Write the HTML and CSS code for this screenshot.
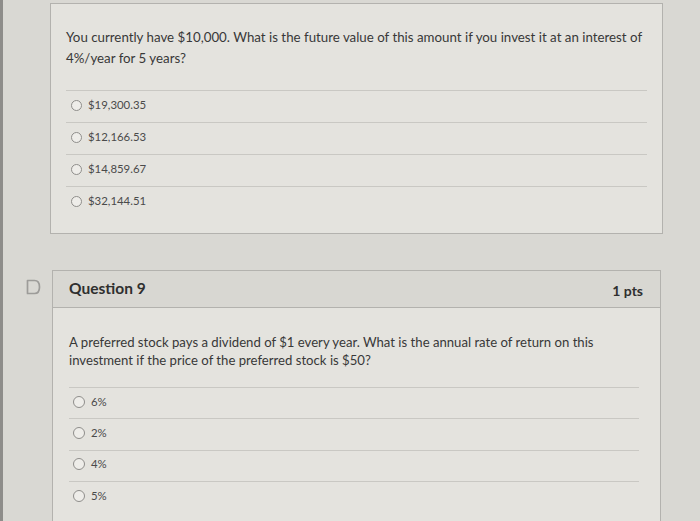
FILE: index.html
```html
<!DOCTYPE html>
<html>
<head>
<meta charset="utf-8">
<link rel="stylesheet" href="styles.css">
</head>
<body>
<div class="page">
  <div class="quiz">
    <section class="card card-first">
      <div class="card-body body-first">
        <p class="q-text q-first">You currently have $10,000. What is the future value of this amount if you invest it at an interest of 4%/year for 5 years?</p>
        <ul class="answers answers-first">
          <li class="answer"><span class="radio"></span><span class="label">$19,300.35</span></li>
          <li class="answer"><span class="radio"></span><span class="label">$12,166.53</span></li>
          <li class="answer"><span class="radio"></span><span class="label">$14,859.67</span></li>
          <li class="answer"><span class="radio"></span><span class="label">$32,144.51</span></li>
        </ul>
      </div>
    </section>

    <section class="card card-second">
      <div class="card-header">
        <svg class="flag" width="18" height="18" viewBox="0 0 18 18" aria-hidden="true">
          <path d="M2.5 2.5 H9.5 Q14.5 2.5 14.5 9 Q14.5 15.5 9.5 15.5 H2.5 Z" fill="none" stroke="#9d9c99" stroke-width="1.7" stroke-linejoin="round"/>
        </svg>
        <h2 class="q-title">Question 9</h2>
        <span class="pts">1 pts</span>
      </div>
      <div class="card-body body-second">
        <p class="q-text q-second">A preferred stock pays a dividend of $1 every year. What is the annual rate of return on this investment if the price of the preferred stock is $50?</p>
        <ul class="answers answers-second">
          <li class="answer"><span class="radio"></span><span class="label">6%</span></li>
          <li class="answer"><span class="radio"></span><span class="label">2%</span></li>
          <li class="answer"><span class="radio"></span><span class="label">4%</span></li>
          <li class="answer"><span class="radio"></span><span class="label">5%</span></li>
        </ul>
      </div>
    </section>
  </div>
</div>
</body>
</html>
```
FILE: styles.css
```css
* { box-sizing: border-box; }
html, body { margin: 0; padding: 0; }
body {
  width: 700px;
  height: 521px;
  overflow: hidden;
  background: #d9d8d3;
  font-family: Lato, "Open Sans", sans-serif;
  color: #363636;
}
.page {
  height: 521px;
  border-left: 3px solid #8e8d8a;
  padding-top: 3px;
}
.quiz {
  display: flex;
  flex-direction: column;
}
.card {
  border: 1px solid #b3b2ae;
  background: #e4e3de;
}
.card-first {
  margin-left: 47px;
  width: 613px;
}
.card-second {
  margin-left: 49px;
  width: 609px;
  margin-top: 36px;
  position: relative;
}
.card-header {
  display: flex;
  align-items: center;
  height: 37px;
  padding: 0 17px 0 16px;
  background: #d8d7d2;
  border-bottom: 1px solid #b3b2ae;
}
.flag {
  position: absolute;
  left: -28px;
  top: 7px;
}
.q-title {
  margin: 0;
  font-size: 15.5px;
  font-weight: 700;
  color: #2f2f2f;
  flex: 1;
  padding-bottom: 2px;
}
.pts {
  font-size: 14px;
  font-weight: 700;
  color: #2f2f2f;
  padding-top: 3px;
}
.q-text {
  margin: 0;
  font-size: 13.3px;
  color: #383838;
}
.body-first {
  padding: 23px 15px 15px 15px;
}
.q-first {
  line-height: 21px;
}
.body-second {
  padding: 25px 21px 16px 16px;
}
.q-second {
  font-size: 13.15px;
  line-height: 18px;
  max-width: 560px;
}
.answers {
  list-style: none;
  margin: 0;
  padding: 0;
}
.answers-first { margin-top: 21px; }
.answers-second { margin-top: 18px; }
.answer {
  display: flex;
  align-items: center;
  padding-bottom: 3px;
  border-top: 1px solid #c9c8c3;
  font-size: 11.4px;
  color: #4a4a4a;
}
.answers-first .answer { padding-left: 5px; height: 32px; }
.answers-second .answer { padding-left: 4px; height: 31.4px; }
.answers-second .radio { width: 12px; height: 12px; }
.radio {
  width: 11px;
  height: 11px;
  border: 1px solid #8f8e8b;
  border-radius: 50%;
  background: #eeede9;
  margin-right: 6px;
  flex: none;
}
.label { line-height: 14px; }
```
